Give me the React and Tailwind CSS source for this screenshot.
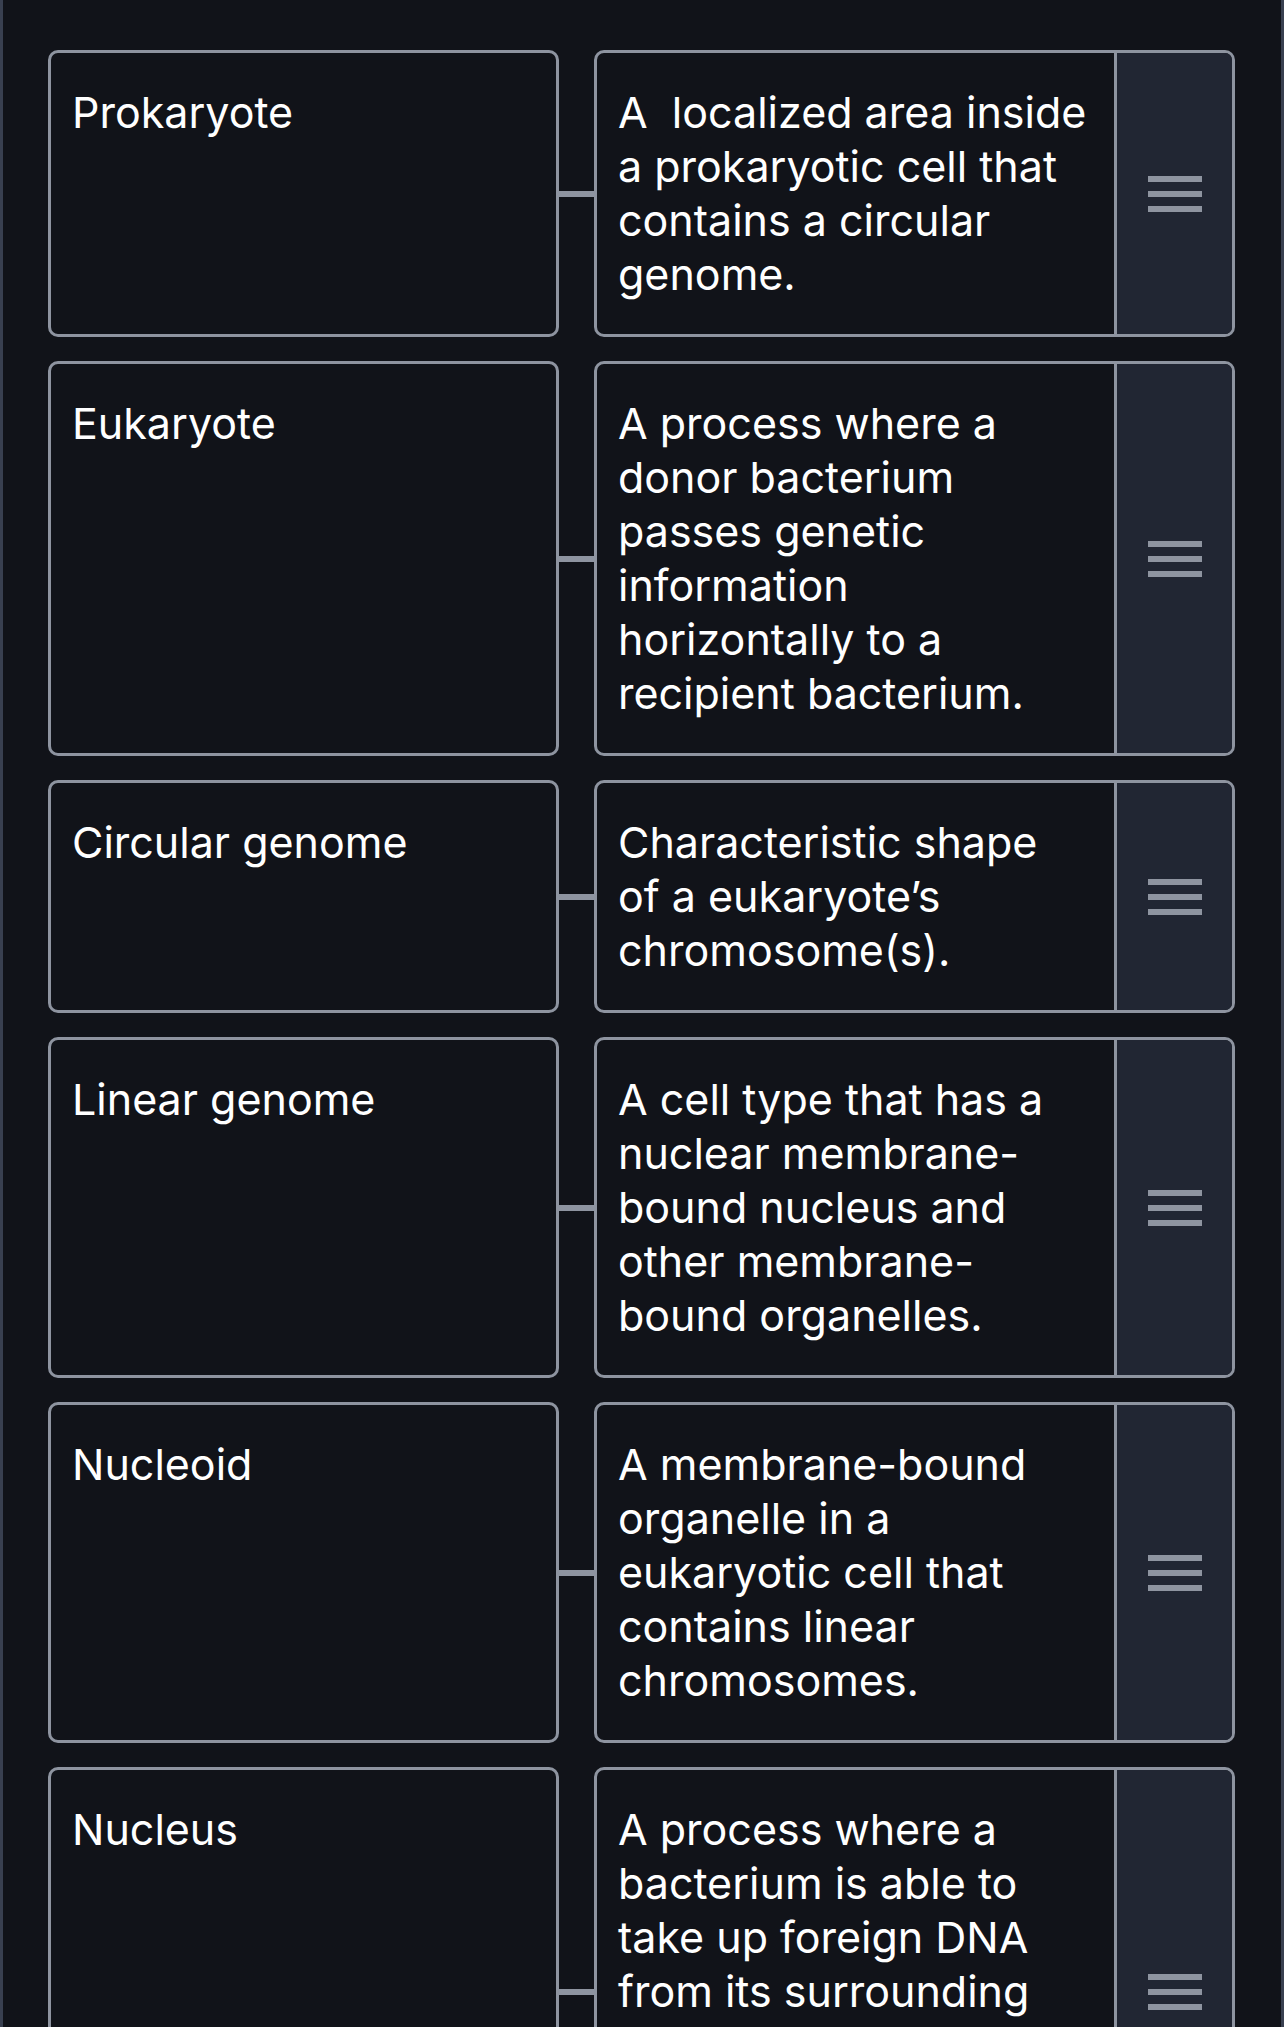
import React from "react";

const rows = [
  {
    term: "Prokaryote",
    lines: ["A\u00a0 localized area inside", "a prokaryotic cell that", "contains a circular", "genome."],
  },
  {
    term: "Eukaryote",
    lines: ["A process where a", "donor bacterium", "passes genetic", "information", "horizontally to a", "recipient bacterium."],
  },
  {
    term: "Circular genome",
    lines: ["Characteristic shape", "of a eukaryote\u2019s", "chromosome(s)."],
  },
  {
    term: "Linear genome",
    lines: ["A cell type that has a", "nuclear membrane-", "bound nucleus and", "other membrane-", "bound organelles."],
  },
  {
    term: "Nucleoid",
    lines: ["A membrane-bound", "organelle in a", "eukaryotic cell that", "contains linear", "chromosomes."],
  },
  {
    term: "Nucleus",
    lines: ["A process where a", "bacterium is able to", "take up foreign DNA", "from its surrounding", "environment and", "incorporates it into", "its own genome."],
  },
];

function Handle() {
  return (
    <div className="flex flex-col gap-[9px] w-[54px]">
      <div className="h-[6px] bg-[#8e94a0]" />
      <div className="h-[6px] bg-[#8e94a0]" />
      <div className="h-[6px] bg-[#8e94a0]" />
    </div>
  );
}

export default function App() {
  return (
    <div
      className="min-h-screen bg-[#111319] border-x-[3px] border-[#394050] pt-[50px] pl-[45px] pr-[46px] text-white"
      style={{ fontFamily: "Inter, 'Noto Sans', sans-serif" }}
    >
      <div className="flex flex-col gap-[24px]">
        {rows.map((r, i) => (
          <div key={i} className="flex items-stretch">
            <div className="w-[511px] shrink-0 border-[3px] border-[#8e94a0] rounded-[10px] bg-[#111319] px-[21px] pt-[32px] pb-[33px] text-[43px] leading-[54px]">
              {r.term}
            </div>
            <div className="w-[35px] shrink-0 flex items-center">
              <div className="h-[6px] w-full bg-[#8e94a0]" />
            </div>
            <div className="w-[641px] shrink-0 flex border-[3px] border-[#8e94a0] rounded-[10px] overflow-hidden bg-[#111319]">
              <div className="flex-1 pl-[21px] pr-[10px] pt-[32px] pb-[33px] text-[43px] leading-[54px] whitespace-nowrap">
                {r.lines.map((l, j) => (
                  <div key={j}>{l}</div>
                ))}
              </div>
              <div className="w-[118px] shrink-0 border-l-[3px] border-[#8e94a0] bg-[#212633] flex items-center justify-center">
                <Handle />
              </div>
            </div>
          </div>
        ))}
      </div>
    </div>
  );
}
